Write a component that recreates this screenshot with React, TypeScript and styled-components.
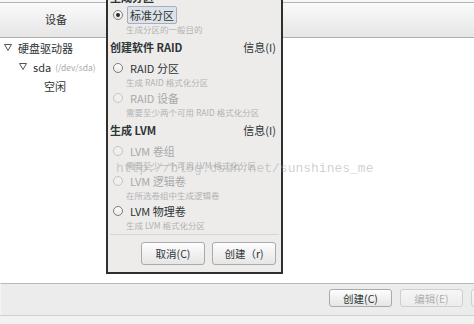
import React from 'react';
import styled, { createGlobalStyle, css } from 'styled-components';

const GlobalStyle = createGlobalStyle`
  html, body {
    margin: 0;
    padding: 0;
    background: #ffffff;
  }
  body {
    font-family: "Noto Sans CJK SC", "Noto Sans", "DejaVu Sans", sans-serif;
    color: #2e3436;
  }
`;

const Window = styled.div`
  position: relative;
  width: 474px;
  height: 324px;
  overflow: hidden;
  display: flex;
  flex-direction: column;
  background: #ffffff;
`;

const TopGap = styled.div`
  height: 2px;
  background: #f7f7f7;
`;

const ColumnHeader = styled.div`
  height: 34px;
  display: flex;
  align-items: center;
  border-top: 1px solid #b4b4b4;
  border-bottom: 1px solid #b0b0b0;
  background: linear-gradient(#fafafa, #e6e6e6);
`;

const HeaderCell = styled.div`
  width: 112px;
  text-align: center;
  font-size: 11px;
  color: #333;
  margin-top: -2px;
`;

const Tree = styled.div`
  flex: 1;
  display: flex;
  flex-direction: column;
`;

const TreeRow = styled.div<{ depth: number }>`
  height: 19px;
  display: flex;
  align-items: center;
  gap: 6px;
  padding-left: ${({ depth }) => 4 + depth * 15}px;
  font-size: 11px;
  color: #2e3436;
`;

const Expander = styled.svg`
  width: 8px;
  height: 7px;
  flex: none;
`;

const DevPath = styled.span`
  font-size: 8.5px;
  color: #a8a8a8;
  margin-left: -2px;
`;

const BottomBar = styled.div`
  height: 32px;
  border-top: 1px solid #b8b8b8;
  background: #ececec;
  display: flex;
  justify-content: flex-end;
  align-items: flex-start;
  padding-top: 5px;
  box-sizing: border-box;
  gap: 8px;
  margin-right: -60px;
  border-left: 1px solid #f4f4f4;
`;

const Footer = styled.div`
  height: 8px;
  border-top: 1px solid #cfcfcf;
  background: #f2f2f2;
`;

const Button = styled.button<{ disabled?: boolean; $w?: number; $h?: number }>`
  width: ${({ $w }) => $w || 63}px;
  height: ${({ $h }) => $h || 18}px;
  padding: 0;
  box-sizing: border-box;
  border: 1px solid #a9a9a9;
  border-radius: 3px;
  background: linear-gradient(#fdfdfd, #e6e6e6);
  font-family: "Noto Sans CJK SC", "Noto Sans", sans-serif;
  font-size: 10.5px;
  color: #2e3436;
  display: flex;
  align-items: center;
  justify-content: center;
  ${({ disabled }) =>
    disabled &&
    css`
      color: #b0b0b0;
      border-color: #cfcfcf;
      background: linear-gradient(#f6f6f6, #ececec);
    `}
`;

const Dialog = styled.div`
  position: absolute;
  left: 106px;
  top: -12px;
  width: 177px;
  box-sizing: border-box;
  border: 2px solid #2f2f2f;
  background: #edeceb;
  padding: 0 5px 7px 2px;
  display: flex;
  flex-direction: column;
`;

const SectionHeader = styled.div<{ first?: boolean }>`
  display: flex;
  justify-content: space-between;
  font-size: 11px;
  font-weight: bold;
  line-height: 14px;
  padding: ${({ first }) => (first ? '0 0 3px' : '3px 0 6px')};
  color: #2e3436;
`;

const InfoLink = styled.span`
  font-weight: normal;
`;

const Option = styled.div`
  display: flex;
  flex-direction: column;
`;

const OptionLine = styled.div`
  height: 15px;
  display: flex;
  align-items: center;
`;

const Radio = styled.span<{ checked?: boolean; disabled?: boolean }>`
  position: relative;
  width: 10px;
  height: 10px;
  box-sizing: border-box;
  border-radius: 50%;
  margin-left: 3px;
  margin-right: 5px;
  flex: none;
  border: 1px solid ${({ disabled }) => (disabled ? '#c4c4c4' : '#7d7d7d')};
  background: ${({ disabled }) => (disabled ? '#efefef' : 'linear-gradient(#ffffff, #e8e8e8)')};
  ${({ checked }) =>
    checked &&
    css`
      &::after {
        content: '';
        position: absolute;
        left: 2px;
        top: 2px;
        width: 4px;
        height: 4px;
        border-radius: 50%;
        background: #2a2a2a;
      }
    `}
`;

const OptionLabel = styled.span<{ disabled?: boolean; focused?: boolean }>`
  font-size: 11px;
  font-weight: normal;
  color: ${({ disabled }) => (disabled ? '#a9a9a9' : '#2e3436')};
  padding: 0 2px;
  line-height: 14px;
  ${({ focused }) =>
    focused &&
    css`
      background: #dde2e9;
      border: 1px solid #a3aec0;
      border-radius: 2px;
      padding: 1px 2px;
      margin-left: -1px;
    `}
`;

const Desc = styled.div`
  height: 15px;
  line-height: 15px;
  padding-left: 16px;
  font-size: 8.5px;
  color: #b3b3b3;
  white-space: nowrap;
`;

const Separator = styled.div`
  height: 1px;
  background: #d6d6d6;
  margin: 1px -3px 0 0;
`;

const DialogButtons = styled.div`
  display: flex;
  justify-content: flex-end;
  gap: 7px;
  margin-top: 7px;
`;

const Watermark = styled.div`
  position: absolute;
  left: 116px;
  top: 161px;
  font-family: "Liberation Mono", "DejaVu Sans Mono", monospace;
  font-size: 13px;
  color: rgba(150, 150, 150, 0.45);
  white-space: nowrap;
  pointer-events: none;
`;

type OptionItem = {
  label: string;
  desc: string;
  disabled?: boolean;
  checked?: boolean;
};

const raidOptions: OptionItem[] = [
  { label: 'RAID 分区', desc: '生成 RAID 格式化分区' },
  { label: 'RAID 设备', desc: '需要至少两个可用 RAID 格式化分区', disabled: true },
];

const lvmOptions: OptionItem[] = [
  { label: 'LVM 卷组', desc: '需要至少一个可用 LVM 格式化分区', disabled: true },
  { label: 'LVM 逻辑卷', desc: '在所选卷组中生成逻辑卷', disabled: true },
  { label: 'LVM 物理卷', desc: '生成 LVM 格式化分区' },
];

const DownArrow = () => (
  <Expander viewBox="0 0 8 7">
    <polygon points="0.5,0.5 7.5,0.5 4,6.5" fill="#fff" stroke="#555" strokeWidth="1" />
  </Expander>
);

const OptionRow = ({ item, focused }: { item: OptionItem; focused?: boolean }) => (
  <Option>
    <OptionLine>
      <Radio checked={item.checked} disabled={item.disabled} />
      <OptionLabel disabled={item.disabled} focused={focused}>
        {item.label}
      </OptionLabel>
    </OptionLine>
    <Desc>{item.desc}</Desc>
  </Option>
);

export default function App() {
  return (
    <>
      <GlobalStyle />
      <Window>
        <TopGap />
        <ColumnHeader>
          <HeaderCell>设备</HeaderCell>
        </ColumnHeader>
        <Tree>
          <TreeRow depth={0}>
            <DownArrow />
            <span>硬盘驱动器</span>
          </TreeRow>
          <TreeRow depth={1}>
            <DownArrow />
            <span>sda</span>
            <DevPath>(/dev/sda)</DevPath>
          </TreeRow>
          <TreeRow depth={2} style={{ paddingLeft: 44 }}>
            <span>空闲</span>
          </TreeRow>
        </Tree>
        <BottomBar>
          <Button>创建(C)</Button>
          <Button disabled>编辑(E)</Button>
          <Button disabled aria-label="删除" />
        </BottomBar>
        <Footer />

        <Dialog>
          <SectionHeader first>生成分区</SectionHeader>
          <OptionRow item={{ label: '标准分区', desc: '生成分区的一般目的', checked: true }} focused />

          <SectionHeader>
            <span>创建软件 RAID</span>
            <InfoLink>信息(I)</InfoLink>
          </SectionHeader>
          {raidOptions.map((o) => (
            <OptionRow key={o.label} item={o} />
          ))}

          <SectionHeader>
            <span>生成 LVM</span>
            <InfoLink>信息(I)</InfoLink>
          </SectionHeader>
          {lvmOptions.map((o) => (
            <OptionRow key={o.label} item={o} />
          ))}

          <Separator />
          <DialogButtons>
            <Button $w={64} $h={23}>取消(C)</Button>
            <Button $w={64} $h={23}>创建（r)</Button>
          </DialogButtons>
        </Dialog>

        <Watermark>http://blog.csdn.net/sunshines_me</Watermark>
      </Window>
    </>
  );
}
